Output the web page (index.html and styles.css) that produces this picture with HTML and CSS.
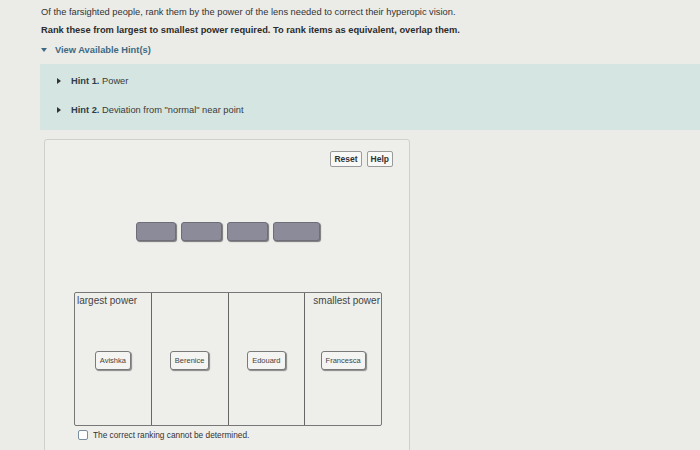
FILE: index.html
```html
<!DOCTYPE html>
<html>
<head>
<meta charset="utf-8">
<link rel="stylesheet" href="styles.css">
</head>
<body>
<div class="page">
  <p class="q">Of the farsighted people, rank them by the power of the lens needed to correct their hyperopic vision.</p>
  <p class="instr">Rank these from largest to smallest power required. To rank items as equivalent, overlap them.</p>
  <div class="hints-toggle"><span class="tri-down"></span>View Available Hint(s)</div>
  <div class="hints">
    <div class="hint"><span class="tri-right"></span><b>Hint 1.</b>&nbsp;Power</div>
    <div class="hint"><span class="tri-right"></span><b>Hint 2.</b>&nbsp;Deviation from "normal" near point</div>
  </div>
  <div class="widget">
    <div class="tools"><button class="btn">Reset</button><button class="btn">Help</button></div>
    <div class="tray">
      <div class="tile t1"></div><div class="tile t2"></div><div class="tile t3"></div><div class="tile t4"></div>
    </div>
    <div class="rank">
      <div class="col"><span class="lbl">largest power</span><span class="chip">Avishka</span></div>
      <div class="col"><span class="chip">Berenice</span></div>
      <div class="col"><span class="chip">Edouard</span></div>
      <div class="col"><span class="lbl right">smallest power</span><span class="chip">Francesca</span></div>
    </div>
    <label class="cb"><span class="box"></span>The correct ranking cannot be determined.</label>
  </div>
</div>
</body>
</html>
```

FILE: styles.css
```css
html, body { margin: 0; padding: 0; }
body {
  width: 700px; height: 450px; overflow: hidden;
  background: #ebebe8;
  font-family: "Liberation Sans", Arial, sans-serif;
  color: #2a2a2a;
}
.page { padding-top: 5px; }
.q { margin: 0 0 0 41px; font-size: 9.3px; line-height: 14px; color: #333; }
.instr { margin: 4px 0 0 41px; font-size: 9.3px; line-height: 14px; font-weight: bold; color: #2b2b2b; }
.hints-toggle {
  margin: 6px 0 0 41px; font-size: 9.3px; line-height: 14px; font-weight: bold; color: #3d6a82;
  display: flex; align-items: center;
}
.tri-down {
  width: 0; height: 0; border-left: 3px solid transparent; border-right: 3px solid transparent;
  border-top: 4px solid #3d6a82; margin-right: 8px;
}
.hints {
  margin: 7px 0 0 40px; background: #d5e5e1; padding: 10px 0 13px 17px;
  display: flex; flex-direction: column; gap: 15px;
}
.hint { font-size: 9.3px; line-height: 14px; color: #3a3a3a; display: flex; align-items: center; }
.hint b { color: #2e3e48; }
.tri-right {
  width: 0; height: 0; border-top: 3px solid transparent; border-bottom: 3px solid transparent;
  border-left: 4px solid #333; margin-right: 10px;
}
.widget {
  margin: 9px 0 0 44px; width: 366px; height: 320px; box-sizing: border-box;
  border: 1px solid #cfcfcc; border-radius: 3px; background: #eeeeeb;
  position: relative;
}
.tools { display: flex; justify-content: flex-end; gap: 5px; padding: 11px 16px 0 0; }
.btn {
  font-family: inherit; font-size: 8.5px; font-weight: bold; color: #333;
  background: #f8f8f6; border: 1px solid #9a9a9a; border-radius: 2px;
  padding: 2px 3px; line-height: 10px; margin: 0;
}
.tray { display: flex; gap: 5px; padding: 55px 0 0 91px; }
.tile {
  height: 17px; background: #8b8b99; border: 1px solid #6e6e7a; border-radius: 3px;
  box-shadow: 1px 1px 1px #777;
}
.t1 { width: 38px; } .t2 { width: 39px; } .t3 { width: 39px; } .t4 { width: 45px; }
.rank {
  margin: 51px 0 0 29px; width: 308px; height: 134px; box-sizing: border-box;
  border: 1px solid #777; border-radius: 2px; display: flex;
}
.col {
  flex: 1; border-right: 1px solid #666; position: relative;
  display: flex; align-items: center; justify-content: center;
}
.col:last-child { border-right: none; }
.lbl { position: absolute; top: 2px; left: 2px; font-size: 10px; color: #444; }
.lbl.right { left: auto; right: 1px; }
.chip {
  font-size: 7.5px; color: #444; background: #f4f4f2; border: 1px solid #7a7a7a; border-radius: 3px;
  padding: 4px 4px; box-shadow: 1px 1px 1px #888; margin-top: 3px;
}
.cb { display: flex; align-items: center; margin: 4px 0 0 33px; font-size: 8.3px; color: #333; }
.box { width: 8px; height: 8px; border: 1px solid #7a8fa0; border-radius: 2px; background: #fff; margin-right: 5px; }
```
